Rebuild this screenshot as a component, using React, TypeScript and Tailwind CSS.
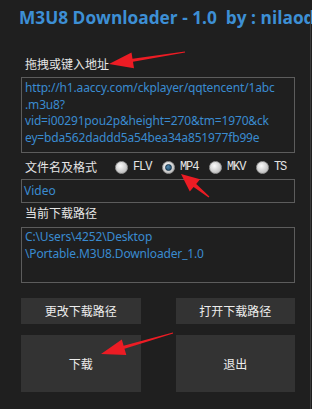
import React from 'react';

const cjk = "font-['Microsoft_YaHei','Noto_Sans_CJK_SC',sans-serif]";

type Pt = [number, number];

function arrowPoints(tail: Pt, tip: Pt, head: number, half: number, shaft: number) {
    const dx = tip[0] - tail[0];
    const dy = tip[1] - tail[1];
    const len = Math.hypot(dx, dy);
    const ux = dx / len;
    const uy = dy / len;
    const nx = -uy;
    const ny = ux;
    const bx = tip[0] - ux * head;
    const by = tip[1] - uy * head;
    const pts: Pt[] = [
        [tail[0] + nx * shaft * 0.3, tail[1] + ny * shaft * 0.3],
        [bx + nx * shaft, by + ny * shaft],
        [bx + nx * half, by + ny * half],
        tip,
        [bx - nx * half, by - ny * half],
        [bx - nx * shaft, by - ny * shaft],
        [tail[0] - nx * shaft * 0.3, tail[1] - ny * shaft * 0.3],
    ];
    return pts.map((p) => `${p[0].toFixed(1)},${p[1].toFixed(1)}`).join(' ');
}

function Radio({ label, checked }: { label: string; checked?: boolean }) {
    return (
        <div className="w-[47px] shrink-0 flex items-center gap-[5px]">
            <div className="w-[13px] h-[13px] shrink-0 rounded-full border border-[#9a9a9a] bg-[radial-gradient(circle_at_40%_35%,#fbfbfb,#c4c4c4_70%,#a8a8a8)] flex items-center justify-center">
                {checked && <div className="w-[7px] h-[7px] rounded-full bg-[radial-gradient(circle_at_40%_35%,#4f86ad,#1d4664)] border border-[#16344b]" />}
            </div>
            <span className="font-['Liberation_Mono',monospace] text-[12px] tracking-[-1.1px] text-[#e4e4e4] leading-[14px]">{label}</span>
        </div>
    );
}

export default function App() {
    return (
        <div className={`relative w-[312px] h-[409px] overflow-hidden bg-[#1f1f1f] ${cjk}`}>
            <div className="absolute right-[1px] top-[10px] bottom-0 w-px bg-[#3c3c3c]" />

            <div className="pl-[19px] pt-[8px] whitespace-nowrap font-['Open_Sans',sans-serif] font-bold text-[17.3px] leading-[20px] text-[#3d8fd5]">
                M3U8 Downloader - 1.0&nbsp;&nbsp;by : nilaoda
            </div>

            <div className="ml-[21px] w-[274px] flex flex-col">
                <div className="mt-[28px] pl-[4px] text-[12px] leading-[16px] text-[#e6e6e6]">拖拽或键入地址</div>

                <div className="mt-[5px] h-[76px] border border-[#5c5c5c] px-[3px] pt-[2px] font-['Noto_Sans',sans-serif] text-[12px] tracking-[-0.15px] leading-[16.5px] text-[#3a8bd0] whitespace-nowrap overflow-hidden">
                    http://h1.aaccy.com/ckplayer/qqtencent/1abc<br />
                    .m3u8?<br />
                    vid=i00291pou2p&amp;height=270&amp;tm=1970&amp;ck<br />
                    ey=bda562daddd5a54bea34a851977fb99e
                </div>

                <div className="mt-[4px] h-[20px] flex items-center">
                    <span className="shrink-0 whitespace-nowrap pl-[4px] w-[94px] text-[12px] text-[#e6e6e6]">文件名及格式</span>
                    <Radio label="FLV" />
                    <Radio label="MP4" checked />
                    <Radio label="MKV" />
                    <Radio label="TS" />
                </div>

                <div className="mt-[2px] h-[24px] border border-[#5c5c5c] pl-[2px] flex items-center font-['Noto_Sans',sans-serif] text-[12px] text-[#3a8bd0]">
                    Video
                </div>

                <div className="mt-[2px] pl-[4px] text-[12px] leading-[16px] text-[#e6e6e6]">当前下载路径</div>

                <div className="mt-[6px] h-[56px] border border-[#5c5c5c] px-[3px] pt-[1px] font-['Noto_Sans',sans-serif] text-[12px] tracking-[-0.15px] leading-[16.5px] text-[#3a8bd0]">
                    C:\Users\4252\Desktop<br />
                    \Portable.M3U8.Downloader_1.0
                </div>

                <div className="mt-[15px] grid grid-cols-2 gap-x-[35px]">
                    <button className="h-[26px] bg-[#333333] text-[12px] text-[#ededed]">更改下载路径</button>
                    <button className="h-[26px] bg-[#333333] text-[12px] text-[#ededed]">打开下载路径</button>
                </div>
                <div className="mt-[11px] grid grid-cols-2 gap-x-[35px]">
                    <button className="h-[57px] bg-[#333333] text-[12px] text-[#ededed]">下载</button>
                    <button className="h-[57px] bg-[#333333] text-[12px] text-[#ededed]">退出</button>
                </div>
            </div>

            <svg className="absolute inset-0 pointer-events-none" width="312" height="409">
                <polygon points={arrowPoints([185, 52], [109, 64], 24, 8, 1.6)} fill="#ec1c24" />
                <polygon points={arrowPoints([209, 197], [181, 174], 18, 8, 2)} fill="#ec1c24" />
                <polygon points={arrowPoints([173, 333], [101, 354], 24, 8, 1.6)} fill="#ec1c24" />
            </svg>
        </div>
    );
}
